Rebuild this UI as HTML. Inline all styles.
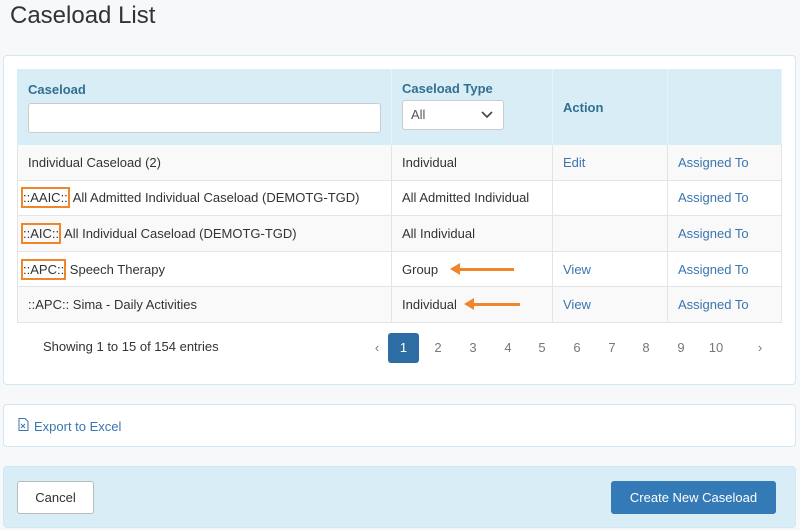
<!DOCTYPE html>
<html><head><style>
*{box-sizing:border-box;margin:0;padding:0}
body{width:800px;height:530px;background:#f7f8f9;font-family:"Liberation Sans",sans-serif;font-size:13px;color:#333;position:relative;overflow:hidden}
.abs{position:absolute}
h1{position:absolute;left:10px;top:1px;font-size:24px;font-weight:normal;color:#333;line-height:30px}
.panel{position:absolute;background:#fff;border:1px solid #cfe8f2;border-radius:4px}
table{position:absolute;left:17px;top:69px;width:765px;border-collapse:collapse}
td,th{border:1px solid #e4e4e4;padding:0 10px;text-align:left;vertical-align:middle;height:35.6px}
th{background:#d9edf7;color:#31708f;font-weight:bold;height:75px;border-color:#d9edf7;border-right:1px solid #e8f3f9}
tr.g td{background:#f9f9f9}
a{color:#3a76b0;text-decoration:none}
.inp{width:353px;height:30px;border:1px solid #ccc;border-radius:3px;background:#fff;margin-top:6px}
.sel{width:102px;height:30px;border:1px solid #ccc;border-radius:3px;background:#fff;margin-top:4px;font-weight:normal;color:#555;line-height:28px;padding-left:8px;position:relative}
.box{border:2px solid #f0862a;padding:1px 0;margin-left:-7px}
.arrow{position:absolute;height:3px;background:#f0862a}
.arrow:before{content:"";position:absolute;left:-8px;top:-5px;border-right:10px solid #f0862a;border-top:6.5px solid transparent;border-bottom:6.5px solid transparent}
.pg{position:absolute;top:333px;height:30px;line-height:30px;color:#777;text-align:center;width:32px}
</style></head><body>
<h1>Caseload List</h1>
<div class="panel" style="left:3px;top:55px;width:793px;height:330px"></div>
<table>
<tr><th style="width:374px;vertical-align:top;padding-top:12px">Caseload<div class="inp"></div></th>
<th style="width:161px;vertical-align:top;padding-top:11px">Caseload Type<div class="sel">All<svg class="abs" style="right:10px;top:10px" width="12" height="8" viewBox="0 0 12 8"><path d="M1 1l5 5 5-5" stroke="#444" stroke-width="1.6" fill="none"/></svg></div></th>
<th style="width:115px">Action</th><th></th></tr>
<tr class="g"><td>Individual Caseload (2)</td><td>Individual</td><td><a>Edit</a></td><td><a>Assigned To</a></td></tr>
<tr><td><span class="box">::AAIC::</span> All Admitted Individual Caseload (DEMOTG-TGD)</td><td>All Admitted Individual</td><td></td><td><a>Assigned To</a></td></tr>
<tr class="g"><td><span class="box">::AIC::</span> All Individual Caseload (DEMOTG-TGD)</td><td>All Individual</td><td></td><td><a>Assigned To</a></td></tr>
<tr><td><span class="box">::APC::</span> Speech Therapy</td><td>Group</td><td><a>View</a></td><td><a>Assigned To</a></td></tr>
<tr class="g"><td>::APC:: Sima - Daily Activities</td><td>Individual</td><td><a>View</a></td><td><a>Assigned To</a></td></tr>
</table>
<div class="arrow" style="left:458px;top:268px;width:56px"></div>
<div class="arrow" style="left:472px;top:303px;width:48px"></div>
<div class="abs" style="left:43px;top:339px">Showing 1 to 15 of 154 entries</div>
<div class="pg" style="left:361px">‹</div>
<div class="pg" style="left:388px;width:31px;background:#2e6da4;color:#fff;border-radius:3px">1</div>
<div class="pg" style="left:422px">2</div><div class="pg" style="left:457px">3</div><div class="pg" style="left:492px">4</div><div class="pg" style="left:526px">5</div><div class="pg" style="left:561px">6</div><div class="pg" style="left:596px">7</div><div class="pg" style="left:630px">8</div><div class="pg" style="left:665px">9</div><div class="pg" style="left:700px">10</div><div class="pg" style="left:744px">›</div>
<div class="panel" style="left:3px;top:404px;width:793px;height:43px"></div>
<svg class="abs" style="left:18px;top:418px" width="11" height="13" viewBox="0 0 11 13"><path d="M1 .5h6l3 3v9H1z" fill="none" stroke="#3a76b0"/><path d="M3 6l4 4M7 6l-4 4" stroke="#3a76b0"/></svg>
<a class="abs" style="left:34px;top:419px">Export to Excel</a>
<div class="abs" style="left:3px;top:466px;width:793px;height:62px;background:#d9edf7;border:1px solid #cfe8f2;border-radius:4px"></div>
<div class="abs" style="left:17px;top:481px;width:77px;height:33px;background:#fff;border:1px solid #bbb;border-radius:3px;text-align:center;line-height:31px">Cancel</div>
<div class="abs" style="left:611px;top:481px;width:165px;height:33px;background:#337ab7;border-radius:3px;color:#fff;text-align:center;line-height:33px">Create New Caseload</div>
</body></html>
